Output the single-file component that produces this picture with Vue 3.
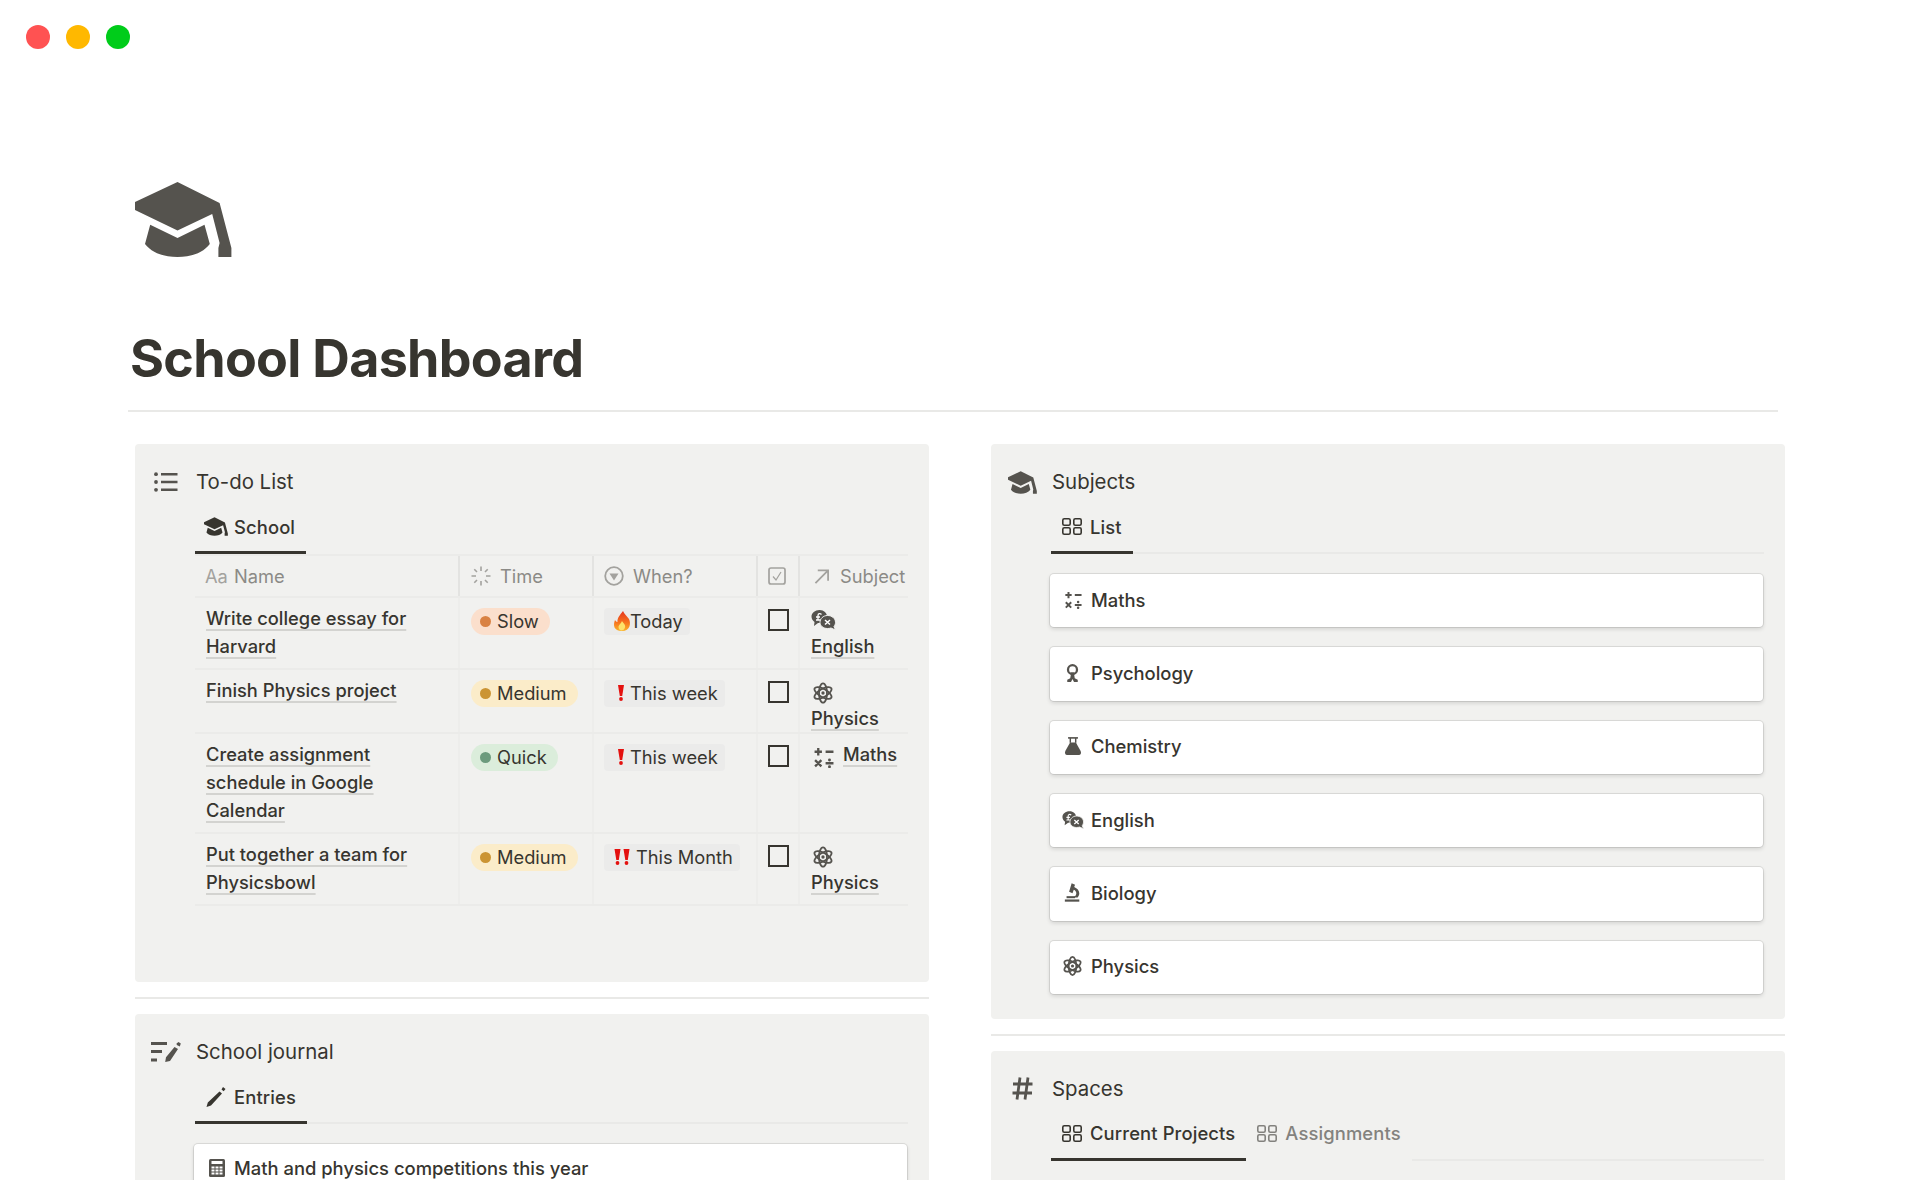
<script setup>
const tabsGrid = 'grid'
const rows = [
  { name: 'Write college essay for Harvard', speed: 'Slow', when: 'Today', mark: 'flame', subject: 'English', icon: 'english' },
  { name: 'Finish Physics project', speed: 'Medium', when: 'This week', mark: 'bang', subject: 'Physics', icon: 'atom' },
  { name: 'Create assignment schedule in Google Calendar', speed: 'Quick', when: 'This week', mark: 'bang', subject: 'Maths', icon: 'math' },
  { name: 'Put together a team for Physicsbowl', speed: 'Medium', when: 'This Month', mark: 'bang2', subject: 'Physics', icon: 'atom' },
]
const subjects = [
  { name: 'Maths', icon: 'math' },
  { name: 'Psychology', icon: 'psych' },
  { name: 'Chemistry', icon: 'flask' },
  { name: 'English', icon: 'english' },
  { name: 'Biology', icon: 'micro' },
  { name: 'Physics', icon: 'atom' },
]
</script>

<template>
  <div class="page">
    <svg class="defs" aria-hidden="true">
      <defs>
        <linearGradient id="flameGrad" x1="0" y1="0" x2="0" y2="1">
          <stop offset="0" stop-color="#e5341f" />
          <stop offset="0.55" stop-color="#f6701d" />
          <stop offset="1" stop-color="#fbb32a" />
        </linearGradient>
      </defs>
      <symbol id="i-cap" viewBox="0 0 97 75">
        <path fill="currentColor" d="M42.5 0 0 20v8l42.5 20.5L77.2 32l7.4 29-1.2 5v9h13v-9L84.6 21z" />
        <path fill="currentColor" d="M15.2 42.7 42.5 56l27-13.3L74.8 62C68 71 56 75 42.5 75S17 71 10 62z" />
      </symbol>
      <symbol id="i-list" viewBox="0 0 24 20">
        <circle cx="2" cy="2.2" r="1.9" fill="currentColor" />
        <circle cx="2" cy="10" r="1.9" fill="currentColor" />
        <circle cx="2" cy="17.8" r="1.9" fill="currentColor" />
        <path d="M7 2.2h16.5M7 10h16.5M7 17.8h16.5" stroke="currentColor" stroke-width="2.4" fill="none" />
      </symbol>
      <symbol id="i-journal" viewBox="0 0 30 20">
        <path d="M0 1.5h16M0 9.500h11M0 18h6" stroke="currentColor" stroke-width="3" fill="none" />
        <path fill="currentColor" d="M23.500 5l3.500 2-8 12-4.800 1 .8-4.800zM25.500 1.500 27.500 0l2.300 1.500-1 3-3-1.600z" />
      </symbol>
      <symbol id="i-hash" viewBox="0 0 21 23">
        <path d="M8 0.500 5 22.500M16 0.500 13 22.500M1 7h19.500M0.500 16h19.500" stroke="currentColor" stroke-width="2.800" fill="none" />
      </symbol>
      <symbol id="i-grid" viewBox="0 0 20 17">
        <g fill="none" stroke="currentColor" stroke-width="1.600">
          <rect x="0.800" y="0.800" width="7.400" height="6.400" rx="1.500" />
          <rect x="11.800" y="0.800" width="7.400" height="6.400" rx="1.500" />
          <rect x="0.800" y="9.800" width="7.400" height="6.400" rx="1.500" />
          <rect x="11.800" y="9.800" width="7.400" height="6.400" rx="1.500" />
        </g>
      </symbol>
      <symbol id="i-pencil" viewBox="0 0 20 20">
        <path fill="currentColor" d="M13.500 4.500 16 6.500 5 18.500 0.500 20l1.300-4.500zM15.500 2.500 17 0l2.500 2-1.800 2.200z" />
      </symbol>
      <symbol id="i-calc" viewBox="0 0 16 18">
        <rect width="16" height="18" rx="1.500" fill="currentColor" />
        <rect x="2.500" y="2" width="11" height="3" fill="#fff" />
        <path d="M2.500 7.500h3v2h-3zM6.500 7.500h3v2h-3zM10.500 7.500h3v2h-3zM2.500 10.500h3v2h-3zM6.500 10.500h3v2h-3zM10.500 10.500h3v2h-3zM2.500 13.500h3v2h-3zM6.500 13.500h3v2h-3zM10.500 13.500h3v2h-3z" fill="#fff" />
      </symbol>
      <symbol id="i-math" viewBox="0 0 20 20">
        <path d="M5 1v7M1.500 4.500h7M12 4.500h7.500M2 12.500l6 6M8 12.500l-6 6M12 15.500h7.500" stroke="currentColor" stroke-width="2.200" fill="none" />
        <circle cx="15.700" cy="12.300" r="1.400" fill="currentColor" />
        <circle cx="15.700" cy="18.700" r="1.400" fill="currentColor" />
      </symbol>
      <symbol id="i-atom" viewBox="0 0 24 24">
        <g fill="none" stroke="currentColor" stroke-width="2.200">
          <ellipse cx="12" cy="12" rx="11.500" ry="4.800" transform="rotate(30 12 12)" />
          <ellipse cx="12" cy="12" rx="11.500" ry="4.800" transform="rotate(90 12 12)" />
          <ellipse cx="12" cy="12" rx="11.500" ry="4.800" transform="rotate(150 12 12)" />
        </g>
        <circle cx="12" cy="12" r="2" fill="currentColor" />
      </symbol>
      <symbol id="i-english" viewBox="0 0 25 20">
        <path fill="currentColor" d="M8.500 0C13 0 16 3 16 6.500c0 3.500-3 6.500-7 6.500H7l-4 3 .5-4C1.500 10.500 0.500 8.500 0.500 6.500 0.500 3 4 0 8.500 0z" />
        <path d="M10.500 4.500C9 3 7 3.500 7 5.500v4M5 7h4M5 10h5" stroke="#fff" stroke-width="1.300" fill="none" />
        <path fill="currentColor" stroke="#f1f1ef" stroke-width="1" d="M16.500 5.500c4.500 0 8 3 8 6.800 0 1.700-.6 3-1.500 4.200l1.500 3.500-4.500-2c-1 .3-2.200.5-3.500.5-4.400 0-7.500-2.800-7.500-6.200s3-6.800 7.500-6.800z" />
        <path d="M14 10l5 4.500M19 10l-5 4.500" stroke="#fff" stroke-width="1.500" fill="none" />
      </symbol>
      <symbol id="i-psych" viewBox="0 0 20 24">
        <circle cx="10" cy="7.500" r="6" fill="none" stroke="currentColor" stroke-width="3" />
        <path fill="currentColor" d="M6.500 12l1.500 1-1 6-4 2v3h5l2-4 2 4h5v-3l-4-2-1-6 1.500-1-1.500-1h-4z" />
      </symbol>
      <symbol id="i-flask" viewBox="0 0 20 20">
        <path d="M4.500 1h11" stroke="currentColor" stroke-width="1.800" fill="none" />
        <path d="M7 1v5.500M13 1v5.500" stroke="currentColor" stroke-width="1.600" fill="none" />
        <path fill="currentColor" d="M6.800 6h6.400l5.300 9.500c1 2 .2 4.500-2 4.500h-13c-2.200 0-3-2.500-2-4.500z" />
      </symbol>
      <symbol id="i-micro" viewBox="0 0 20 22">
        <path d="M1 20.500h17" stroke="currentColor" stroke-width="2.600" fill="none" />
        <path d="M3 16.500h10" stroke="currentColor" stroke-width="2.400" fill="none" />
        <path fill="currentColor" d="M9 0l4 2-1 2.500c3.500 1.500 6 4.200 6 7.500 0 2-.8 3.700-2 5h-5c2-1 3.500-2.700 3.500-5 0-2-1.200-3.500-3-4.300L10 12 6 10z" />
      </symbol>
      <symbol id="i-spin" viewBox="0 0 20 20">
        <path d="M10 .500v4.500M10 15v4.500M.500 10H5M15 10h4.500M3.300 3.300l2.700 2.700M14 14l2.700 2.700M16.700 3.300 14 6M6 14l-2.700 2.700" stroke="currentColor" stroke-width="1.600" fill="none" />
      </symbol>
      <symbol id="i-circle" viewBox="0 0 20 20">
        <circle cx="10" cy="10" r="8.800" fill="none" stroke="currentColor" stroke-width="1.800" />
        <path fill="currentColor" d="M5.500 7.500h9L10 14.500z" />
      </symbol>
      <symbol id="i-check" viewBox="0 0 18 18">
        <rect x="1" y="1" width="16" height="16" rx="2" fill="none" stroke="currentColor" stroke-width="1.700" />
        <path d="M5 9.500 8 13l5-8" fill="none" stroke="currentColor" stroke-width="1.200" />
      </symbol>
      <symbol id="i-arrow" viewBox="0 0 16 16">
        <path d="M1 15 14.500 1.500M3.500 1.500h11v11" fill="none" stroke="currentColor" stroke-width="1.900" />
      </symbol>
      <symbol id="i-flame" viewBox="0 0 18 20">
        <path fill="url(#flameGrad)" d="M10 0c1 3 4 5 6 8 2 4 1.500 12-7 12S0 14 2 9c.7 1 1.500 2 2.500 2C4 7 7 4 10 0z" />
        <path fill="#fde26a" d="M9 10c1 2 4 3.500 3 6.500-.5 2-2 3-3.500 3S5.300 18 5.500 15.500C6 13.500 8 12.500 9 10z" />
      </symbol>
      <symbol id="i-bang" viewBox="0 0 8 16">
        <path fill="#e4110f" d="M1 0h6L5.200 11H2.800z" />
        <circle cx="4" cy="14" r="1.900" fill="#e4110f" />
      </symbol>
      <symbol id="i-bang2" viewBox="0 0 16 16">
        <path fill="#e4110f" d="M0.500 0h6L4.800 11H2.300zM9.500 0h6L13.800 11h-2.500z" />
        <circle cx="3.500" cy="14" r="1.900" fill="#e4110f" />
        <circle cx="12.500" cy="14" r="1.900" fill="#e4110f" />
      </symbol>
    </svg>

    <div class="lights">
      <span class="light red"></span>
      <span class="light amber"></span>
      <span class="light green"></span>
    </div>

    <header class="head">
      <svg class="hero"><use href="#i-cap" width="100%" height="100%" /></svg>
      <h1>School Dashboard</h1>
    </header>
    <div class="rule"></div>

    <main class="columns">
      <section class="col">
        <div class="panel todo">
          <div class="ptitle">
            <span class="pico"><svg class="i-list"><use href="#i-list" width="100%" height="100%" /></svg></span>
            <span>To-do List</span>
          </div>
          <div class="tabs">
            <div class="tab on">
              <svg class="tcap"><use href="#i-cap" width="100%" height="100%" /></svg>
              <span>School</span>
            </div>
            <div class="fill none"></div>
          </div>
          <div class="table">
            <div class="tr th">
              <div class="td"><span class="aa">Aa</span><span>Name</span></div>
              <div class="td"><svg class="hi"><use href="#i-spin" width="100%" height="100%" /></svg><span>Time</span></div>
              <div class="td"><svg class="hi"><use href="#i-circle" width="100%" height="100%" /></svg><span>When?</span></div>
              <div class="td chk"><svg class="hc"><use href="#i-check" width="100%" height="100%" /></svg></div>
              <div class="td sj"><svg class="ha"><use href="#i-arrow" width="100%" height="100%" /></svg><span>Subject</span></div>
            </div>
            <div v-for="r in rows" :key="r.name" class="tr">
              <div class="td nm"><span class="ul">{{ r.name }}</span></div>
              <div class="td pl">
                <span class="pill" :class="r.speed.toLowerCase()"><i class="dot"></i>{{ r.speed }}</span>
              </div>
              <div class="td pl">
                <span class="tag">
                  <svg :class="'m-' + r.mark"><use :href="'#i-' + r.mark" width="100%" height="100%" /></svg>
                  {{ r.when }}
                </span>
              </div>
              <div class="td chk"><span class="box"></span></div>
              <div class="td subj">
                <svg :class="'s-' + r.icon"><use :href="'#i-' + r.icon" width="100%" height="100%" /></svg>
                <span class="ul">{{ r.subject }}</span>
              </div>
            </div>
          </div>
        </div>

        <div class="sep"></div>

        <div class="panel tail">
          <div class="ptitle">
            <span class="pico"><svg class="i-journal"><use href="#i-journal" width="100%" height="100%" /></svg></span>
            <span>School journal</span>
          </div>
          <div class="tabs">
            <div class="tab on">
              <svg class="tpen"><use href="#i-pencil" width="100%" height="100%" /></svg>
              <span>Entries</span>
            </div>
            <div class="fill"></div>
          </div>
          <div class="card jcard">
            <svg class="calc"><use href="#i-calc" width="100%" height="100%" /></svg>
            <span class="jtext">Math and physics competitions this year</span>
          </div>
        </div>
      </section>

      <section class="col">
        <div class="panel subjects">
          <div class="ptitle">
            <span class="pico"><svg class="i-cap"><use href="#i-cap" width="100%" height="100%" /></svg></span>
            <span>Subjects</span>
          </div>
          <div class="tabs">
            <div class="tab on">
              <svg class="tgrid"><use href="#i-grid" width="100%" height="100%" /></svg>
              <span>List</span>
            </div>
            <div class="fill"></div>
          </div>
          <div class="cards">
            <div v-for="s in subjects" :key="s.name" class="card">
              <span class="cico"><svg :class="'c-' + s.icon"><use :href="'#i-' + s.icon" width="100%" height="100%" /></svg></span>
              <span>{{ s.name }}</span>
            </div>
          </div>
        </div>

        <div class="sep"></div>

        <div class="panel tail">
          <div class="ptitle">
            <span class="pico"><svg class="i-hash"><use href="#i-hash" width="100%" height="100%" /></svg></span>
            <span>Spaces</span>
          </div>
          <div class="tabs">
            <div class="tab on">
              <svg class="tgrid"><use :href="'#i-' + tabsGrid" width="100%" height="100%" /></svg>
              <span>Current Projects</span>
            </div>
            <div class="tab off">
              <svg class="tgrid"><use :href="'#i-' + tabsGrid" width="100%" height="100%" /></svg>
              <span>Assignments</span>
            </div>
            <div class="fill"></div>
          </div>
        </div>
      </section>
    </main>
  </div>
</template>

<style>
html, body { background: #fff; }
</style>

<style scoped>
.page {
  height: 1180px;
  overflow: hidden;
  background: #fff;
  color: #37352f;
  font-family: Inter, "Liberation Sans", sans-serif;
  font-size: 18.4px;
  line-height: 28px;
}
.defs { display: block; width: 0; height: 0; }
svg { display: block; flex: none; }

.lights { display: flex; gap: 16px; padding: 25px 0 0 26px; }
.light { width: 24px; height: 24px; border-radius: 50%; }
.red { background: #ff5252; }
.amber { background: #ffb800; }
.green { background: #00cc1a; }

.head { padding: 133px 0 0 130px; }
.hero { width: 97px; height: 75px; margin-left: 5px; color: #55534e; }
h1 {
  margin: 69px 0 0;
  font-size: 52px;
  line-height: 66px;
  font-weight: 700;
  letter-spacing: -0.7px;
}
.rule { width: 1650px; height: 2px; margin: 18px 0 0 128px; background: #e9e9e7; }

.columns { display: flex; gap: 62px; padding: 32px 0 0 135px; }
.col { width: 794px; }
.sep { height: 2px; margin: 15px 0; background: #e9e9e7; }

.panel {
  background: #f1f1ef;
  border-radius: 4px;
  padding: 20px 21px 0 0;
}
.panel.todo { padding-bottom: 76px; }
.panel.subjects { padding-bottom: 25px; }
.panel.tail { padding-bottom: 120px; }

.ptitle { display: flex; align-items: center; height: 36px; font-size: 20.4px; color: #37352f; }
.pico { width: 62px; margin-right: -1px; display: flex; justify-content: center; color: #55534e; }
.i-list { width: 24px; height: 20px; }
.i-journal { width: 30px; height: 20px; }
.i-cap { width: 29px; height: 23px; }
.i-hash { width: 21px; height: 23px; }

.tabs { display: flex; height: 49px; margin: 5px 0 0 60px; }
.tab {
  display: flex;
  align-items: center;
  gap: 8px;
  height: 49px;
  padding: 0 11px 6px;
  box-sizing: border-box;
  font-weight: 500;
  letter-spacing: 0.12px;
}
.tab.on { padding-bottom: 3px; border-bottom: 3px solid #37352f; }
.tab.off { color: #83827e; }
.fill { flex: 1; border-bottom: 2px solid #e9e9e7; }
.fill.none { border-bottom: 0; }
.tcap { width: 24px; height: 19px; margin-left: -2px; margin-right: -2px; color: #37352f; }
.tpen { width: 20px; height: 20px; }
.tgrid { width: 20px; height: 17px; }
.tab.off .tgrid { color: #83827e; }

.table { margin-left: 60px; font-size: 18.3px; }
.tr {
  display: grid;
  grid-template-columns: 265px 134px 164px 42px 108px;
  border-bottom: 2px solid #ebebe9;
}
.td { border-right: 2px solid #ededeb; padding: 7px 0 7px 11px; min-width: 0; }
.td:last-child { border-right: 0; }
.th { height: 44px; box-sizing: border-box; border-top: 2px solid #ebebe9; color: #8b8a86; }
.th .td { display: flex; align-items: center; padding: 0 0 0 10px; gap: 9px; border-right-color: #e3e3e1; font-weight: 400; }
.aa { color: #a3a29e; width: 23px; margin-right: -3px; }
.hi { width: 20px; height: 20px; color: #a3a29e; }
.th .td:nth-child(2) { padding-left: 11px; }
.th .chk { padding-left: 11px; }
.hc { width: 18px; height: 18px; color: #a3a29e; }
.ha { width: 16px; height: 15px; color: #a3a29e; margin-left: 3px; }
.th .sj { padding-left: 11px; gap: 10px; }

.nm { padding: 6px 24px 8px 11px; font-weight: 500; }
.ul {
  text-decoration: underline;
  text-decoration-color: #d3d3d0;
  text-decoration-thickness: 1.5px;
  text-underline-offset: 4px;
  text-decoration-skip-ink: none;
}
.td.pl { display: flex; align-items: flex-start; padding: 10px 0 0 10px; }
.td.pl:nth-child(2) { padding-left: 11px; }
.pill {
  display: inline-flex;
  align-items: center;
  height: 27px;
  box-sizing: border-box;
  padding: 0 11px 1px 9px;
  border-radius: 14px;
}
.dot { width: 11px; height: 11px; border-radius: 50%; margin: 1px 6px 0 0; }
.slow { background: #fbdfcc; }
.slow .dot { background: #d98243; }
.medium { background: #fbecc9; }
.medium .dot { background: #cb9433; }
.quick { background: #dbeddb; }
.quick .dot { background: #6c9b7d; }
.tag {
  display: inline-flex;
  align-items: center;
  height: 27px;
  box-sizing: border-box;
  padding: 0 7px 1px 9px;
  border-radius: 4px;
  background: #ebebea;
  white-space: nowrap;
}
.m-flame { width: 18px; height: 20px; margin-right: -1px; }
.m-bang { width: 8px; height: 16px; margin: 0 5px 0 4px; }
.m-bang2 { width: 16px; height: 16px; margin-right: 6px; margin-left: 1px; }
.td.chk { padding: 0 0 0 10px; }
.box { display: block; width: 21px; height: 22px; margin-top: 11px; box-sizing: border-box; border: 2.5px solid #37352f; }
.subj {
  display: flex;
  flex-wrap: wrap;
  align-items: flex-start;
  align-content: flex-start;
  column-gap: 9px;
  padding: 6px 7px 0 11px;
  font-weight: 500;
}
.s-english { width: 25px; height: 20px; margin: 6px 0 2px; color: #55534e; }
.s-atom { width: 20px; height: 22px; margin: 6px 0 0 2px; color: #55534e; }
.s-math { width: 21px; height: 21px; margin: 7px 0 0 2px; color: #55534e; }

.cards { display: flex; flex-direction: column; gap: 20px; margin: 20px 0 0 60px; }
.card {
  display: flex;
  align-items: center;
  height: 53.33px;
  box-sizing: border-box;
  padding-bottom: 2px;
  margin: 0 1px 0 -1px;
  background: #fff;
  border-radius: 4px;
  box-shadow: 0 0 0 1px rgba(15, 15, 15, .09), 0 2px 4px rgba(15, 15, 15, .14);
  font-weight: 500;
}
.cico { width: 41px; box-sizing: border-box; padding-left: 4px; display: flex; justify-content: center; color: #55534e; }
.c-math { width: 18px; height: 18px; }
.c-psych { width: 15px; height: 18px; }
.c-flask { width: 18px; height: 18px; }
.c-english { width: 22px; height: 18px; }
.c-micro { width: 17px; height: 19px; }
.c-atom { width: 19px; height: 20px; }
.jcard { margin: 20px 1px 0 59px; height: 60px; padding-bottom: 12px; }
.jtext { line-height: 20px; }
.calc { width: 16px; height: 18px; margin: 0 9px 0 15px; color: #55534e; }
</style>
